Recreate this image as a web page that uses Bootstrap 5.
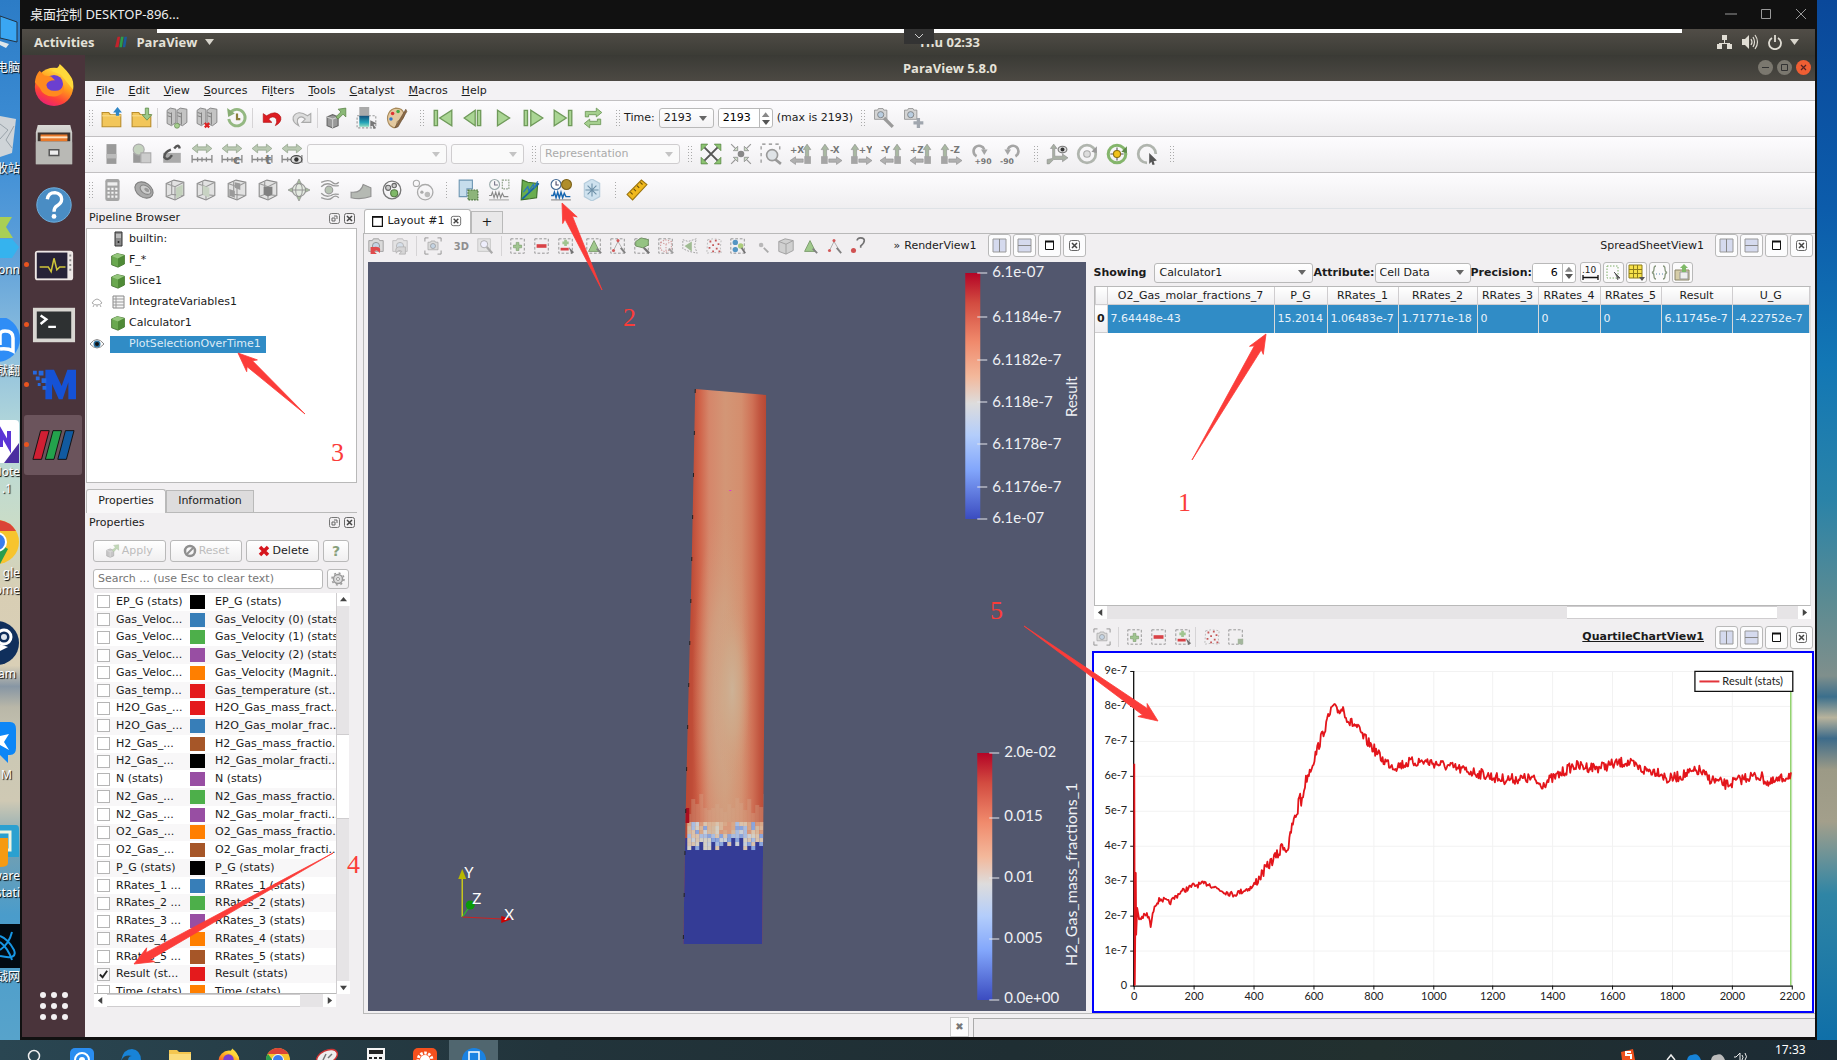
<!DOCTYPE html>
<html lang="en">
<head>
<meta charset="utf-8">
<meta name="viewport" content="width=device-width, initial-scale=1">
<title>ParaView 5.8.0</title>
<link rel="stylesheet" href="https://cdn.jsdelivr.net/npm/bootstrap@5.3.0/dist/css/bootstrap.min.css">
<style>
:root{--edge:#b9b9b9;--panel:#f1eff1}
body{font:11px/16px "DejaVu Sans",sans-serif;color:#1b1b1b;height:100vh;background:#22343b}
.cjk{font-family:"Noto Sans","Noto Sans CJK SC",sans-serif}
button{font:inherit;color:inherit;padding:0;border:0;background:none}
.wall{width:20px;flex:none;overflow:hidden}
.wall-l{background:linear-gradient(#2c7cc6,#3f8fd6 15%,#5d9fd9 24%,#8fc0de 34%,#b6d9d9 42%,#c9dcc8 50%,#d8ceb4 57%,#d9cfb6 64%,#8796a4 66%,#b9b7a8 68%,#cbc8b4 72%,#cfc9b4 77%,#6f9fb4 82%,#4a9ccb 88%,#57a3cb)}
.wall-r{background:linear-gradient(#0a489a,#0c5cab 20%,#1277b5 35%,#2a83a8 48%,#5c8b92 58%,#7f8f8c 65%,#3b6f8c 67%,#b8b39c 69%,#3d6b8a 71%,#9c9a86 74%,#a39f8b 79%,#2f85a5 86%,#0f6fa8)}
.shortcut{height:101px;padding-top:15px;color:#fff;font:12px/17px "Noto Sans","Noto Sans CJK SC",sans-serif;text-shadow:1px 1px 1px #000;white-space:nowrap;display:flex;flex-direction:column;align-items:flex-end}
.shortcut svg{flex:none;width:20px;height:44px}
.win{border:solid #111;border-width:0 2px 3px}
.titlebar{height:29px;background:#111;color:#eee;font-size:13px}
.gpanel{height:26px;background:linear-gradient(#514d47,#3c3c36);color:#e4e1d8;font:700 13px/20px "Open Sans",sans-serif}
.gpanel .pull{left:50%;top:0;width:30px;height:15px;background:#333;margin-left:-15px}
.whiteline{left:135px;right:133px;top:0;height:4px;background:#fff}
.launch{width:63px;background:#4a343b}
.launch .item{height:60px;position:relative}
.launch .item svg{width:44px;height:44px}
.launch .run::before{content:"";position:absolute;left:2px;width:5px;height:5px;border-radius:50%;background:#e9541f}
.launch .cur{background:#6b545c;border-radius:3px;margin:0 3px 0 2px}
.launch .cur::before{left:0}
.apptitle{height:26px;background:linear-gradient(#3a3a35,#4c4943);color:#e6e3da;font:700 13px/20px "Open Sans",sans-serif}
.round{width:15px;height:15px;border-radius:50%;background:#7b786f;display:flex}
.round.end{background:#ef5e33}
.menus{height:19px;background:#f3f2f4;gap:14px;padding:1px 0 0 11px}
.menus a{color:#1b1b1b;text-decoration:none}
.tb{display:flex;align-items:center}
.bar{height:36px;border-top:1px solid #c2c0c2;background:linear-gradient(#fdfcfe,#efeef0);padding-left:2px}
.grip{width:16px;height:19px;flex:none;background:radial-gradient(circle,#aaa 34%,transparent 40%) 7px 0/3px 3px;background-clip:content-box;padding:0 4px 0 7px}
.bar>.tb:first-child>.grip:first-child{width:10px;padding:0 3px 0 2px}
.bar3 .grip{width:14px}
.sepr{width:5px;height:20px;flex:none;border-left:1px solid #d6d4d6}
.ib{width:30px;height:24px;flex:none;display:flex;align-items:center;justify-content:center}
.ib svg{width:22px;height:22px}
.bar3 .ib{width:31px}
.vtb .ib{width:24px}
.vtb .ib svg{width:18px;height:18px;opacity:.8}
.qsel,.qbox{height:20px;border:1px solid var(--edge);border-radius:3px;background-color:#fff;font:11px/16px "DejaVu Sans",sans-serif;color:#1b1b1b;padding:0 4px;min-width:0}
.qsel{appearance:none;background:url("data:image/svg+xml,%3Csvg xmlns='http://www.w3.org/2000/svg' viewBox='0 0 8 5'%3E%3Cpath d='M0 0h8L4 5z' fill='%23666'/%3E%3C/svg%3E") right 6px center/8px 5px no-repeat,linear-gradient(#fff,#f3f2f4)}
.qsel:disabled{color:#aaa;border-color:#cfcdcf;opacity:1;background:url("data:image/svg+xml,%3Csvg xmlns='http://www.w3.org/2000/svg' viewBox='0 0 8 5'%3E%3Cpath d='M0 0h8L4 5z' fill='%23c4c4c4'/%3E%3C/svg%3E") right 6px center/8px 5px no-repeat,#fafafa}
.spin{width:57px;height:20px;border:1px solid var(--edge);border-radius:3px;background:#fff;display:flex;overflow:hidden}
.spin input{border:0;width:100%;min-width:0;padding:0 4px;font:inherit;outline:0;background:#fff}
.spin span{width:13px;flex:none;border-left:1px solid var(--edge);display:flex;flex-direction:column;align-items:center;justify-content:space-evenly}
.spin button{display:block;width:8px;height:5px;background:#888;clip-path:polygon(50% 0,100% 100%,0 100%)}
.spin button+button{transform:rotate(180deg);background:#555}
.dock{width:278px;background:var(--panel)}
.dhead{height:19px;padding:0 6px 0 4px}
.dhead svg{width:15px;height:15px}
.dhead.second{height:20px}
.tree{height:255px;background:#fff;border:1px solid var(--edge);margin:0 6px 0 1px}
.tree .node{height:21px;display:flex;align-items:center}
.tree .eye{width:20px;flex:none;text-align:center;display:flex;justify-content:center}
.tree .kind{width:16px;height:16px;flex:none;margin:0 3px 0 3px}
.tree .sel{background:#308cc6;color:#dcebf6;height:17px;display:flex;margin-left:3px;padding:0 5px 0 19px}
.ptabs{height:24px;border-bottom:1px solid var(--edge);margin:6px 6px 0 1px}
.ptabs button{height:22px;background:#dddcdd;border:1px solid var(--edge);border-bottom:0;width:88px}
.ptabs .on{height:24px;background:#f8f7f8;width:80px;border-radius:3px 3px 0 0;margin-bottom:-1px}
.prow{width:256px;margin:7px 0 0 8px;gap:4px}
.qbtn{height:22px;border:1px solid var(--edge);border-radius:3px;background:linear-gradient(#fff,#f0eff0);display:flex;align-items:center;justify-content:center;gap:2px}
.qbtn:disabled{color:#bdbdbd}
.qbtn svg{width:14px;height:14px}
.third{flex:1 1 40px}
.plist{margin:4px 0 0 9px;width:255px}
.vars{height:401px;overflow:hidden;background:#fff;border-bottom:1px solid var(--edge)}
.vars .rows{height:408px;display:flex;flex-direction:column}
.vrow{flex:1 1 0;min-height:0;display:flex;align-items:center;white-space:nowrap;overflow:hidden}
.vrow:nth-child(even){background:#f8f7f8}
.vrow input{appearance:none;width:13px;height:13px;margin:0 6px 0 3px;border:1px solid #b5b5b5;background:#fff;flex:none}
.vrow input:checked{background:url("data:image/svg+xml,%3Csvg xmlns='http://www.w3.org/2000/svg' viewBox='0 0 12 12'%3E%3Cpath d='M2 6l3 3 5-7' fill='none' stroke='%23222' stroke-width='2'/%3E%3C/svg%3E")}
.vrow label{width:74px;flex:none}
.vrow i{width:15px;height:14px;flex:none;margin-right:10px}
.sbv{width:13px;background:#e6e4e6;border-left:1px solid #cfcdcf;margin-bottom:13px}
.sbv button,.sbh button{background:#fff;width:13px;height:13px;flex:none;display:flex;align-items:center;justify-content:center}
.sbv button svg,.sbh button svg{width:7px;height:7px}
.sbh{height:13px;background:#e6e4e6;display:flex}
.thumb{background:#fff;border:solid #cfcdcf;border-width:1px 0}
.ltabs{height:24px;padding-left:1px}
.ltabs button{border:1px solid var(--edge);border-bottom:0}
.ltabs .on{background:#fff;width:107px;height:24px;border-radius:3px 3px 0 0;gap:4px}
.ltabs .plus{width:32px;height:22px;background:#e9e8e9;font-size:13px}
.frame{border:solid var(--edge);border-width:1px 0 1px 1px;background:var(--panel)}
.half{flex:1 1 0}
.vtb{height:28px;flex:none;padding-bottom:4px}
.vtb .wb{width:23px;height:23px;border:1px solid var(--edge);border-radius:3px;background:#fcfcfd;display:flex;align-items:center;justify-content:center;flex:none}
.vtb .wb svg{width:15px;height:15px}
.wins{display:flex;gap:2px;margin-left:11px;padding-right:2px}
.canvas{background:#52576e;margin:0 4px 2px 4px}
.sheet{background:#fff;border:1px solid var(--edge);border-right-color:#ddd;overflow:hidden;margin-top:2px}
.sheet table{table-layout:fixed;width:100%;border-collapse:collapse}
.sheet th{height:18px;background:linear-gradient(#fff,#efeef0);border:1px solid #cfcdcf;border-top:0;font-weight:400;text-align:center;padding:0;line-height:16px;white-space:nowrap}
.sheet td{height:28px;background:#308cc6;color:#e8f2fa;border-right:1px solid #d9d9d9;padding:0 0 0 3px;white-space:nowrap}
.sheet tbody th{font-weight:700;border-left:0}
.tool{width:21px;height:21px;border:1px solid var(--edge);border-radius:3px;background:#fbfafb;display:flex;align-items:center;justify-content:center;flex:none;margin-right:2px}
.tool svg{width:17px;height:17px}
.plot{background:#fff;border:2px solid #00f;margin:0 1px 0 2px}
.plot svg,.canvas svg{display:block;width:100%;height:100%}
.stat{height:23px;background:var(--panel)}
.stat .cancel{width:19px;height:20px;border:1px solid #c9c9c9;background:#fbfbfb;color:#777;font-size:10px}
.stat .prog{border:1px solid #aaa;border-right:0;border-bottom:0;height:19px;background:#eeecee}
.task{height:20px;background:linear-gradient(90deg,#2a4652,#22343b 30%,#1f2e33 55%,#22302f 75%,#1c2b35);overflow:hidden}
.task .ti{width:49px;height:20px;display:flex;justify-content:center;padding-top:8px;flex:none}
.task .ti svg{width:24px;height:24px;flex:none}
.task .clock{font-size:12px;line-height:20px;width:62px}
.notes{inset:0;width:100%;height:100%;pointer-events:none}
</style>
<script src="https://cdn.jsdelivr.net/npm/bootstrap@5.3.0/dist/js/bootstrap.bundle.min.js"></script>
</head>
<body class="d-flex flex-column overflow-hidden position-relative">

<svg width="0" height="0" class="position-absolute" aria-hidden="true">
<defs>
<linearGradient id="cool" x1="0" y1="0" x2="0" y2="1"><stop offset="0" stop-color="#b40426"/><stop offset=".12" stop-color="#d24b40"/><stop offset=".28" stop-color="#f08a6c"/><stop offset=".42" stop-color="#f3b89b"/><stop offset=".53" stop-color="#dddcdc"/><stop offset=".66" stop-color="#b3cdfb"/><stop offset=".8" stop-color="#82a6fb"/><stop offset="1" stop-color="#3b4cc0"/></linearGradient>
<linearGradient id="teal" x1="0" y1="0" x2="0" y2="1"><stop offset="0" stop-color="#14507c"/><stop offset=".6" stop-color="#23a3b8"/><stop offset="1" stop-color="#8fdcc0"/></linearGradient>
<linearGradient id="fox" x1=".8" y1="0" x2=".3" y2="1"><stop offset="0" stop-color="#fff04a"/><stop offset=".45" stop-color="#ff9a1c"/><stop offset=".75" stop-color="#ff4238"/><stop offset="1" stop-color="#e81e78"/></linearGradient>
<linearGradient id="silver" x1="0" y1="0" x2="0" y2="1"><stop offset="0" stop-color="#d9d9d6"/><stop offset="1" stop-color="#9a9a96"/></linearGradient>
</defs>
<symbol id="folder" viewBox="0 0 20 20"><path d="M1 18V5h6l1.500 2H18v11z" fill="#f2c65a" stroke="#b98d2b"/><path d="M1 8h17" stroke="#fadd8c"/></symbol>
<symbol id="open" viewBox="0 0 20 20"><use href="#folder"/><path d="M15 0l4 5h-2.500v3h-3V5H11z" fill="#2f86c6"/></symbol>
<symbol id="save" viewBox="0 0 20 20"><use href="#folder"/><path d="M13 1h3v6h3l-4.500 5L10 7h3z" fill="#9cc98a" stroke="#5f8a4c" stroke-width=".7"/></symbol>
<symbol id="srv" viewBox="0 0 20 20"><path d="M1 3l3-2 5 1v12l-4 3-4-2zM10 3l3-2 6 1v12l-4 3-5-2z" fill="#c4c4c4" stroke="#808080" stroke-width=".8"/><path d="M5 5v11M14 5v11M1.500 5l3 1M1.500 8l3 1M10.500 5l3 1M10.500 8l3 1" stroke="#777" stroke-width=".8"/></symbol>
<symbol id="srv-on" viewBox="0 0 20 20"><use href="#srv"/><circle cx="10" cy="17" r="2.300" fill="#a7d08f" stroke="#6a8c58" stroke-width=".7"/></symbol>
<symbol id="srv-off" viewBox="0 0 20 20"><use href="#srv"/><path d="M8 14.500l4 4m0-4l-4 4" stroke="#d22" stroke-width="2"/></symbol>
<symbol id="hist" viewBox="0 0 20 20"><path d="M4 5a7.500 7.500 0 1 1-1.500 6" fill="none" stroke="#94b882" stroke-width="2.600"/><path d="M1 1l1 8 6-3z" fill="#88ad74"/><path d="M10 6v5h3" fill="none" stroke="#8b7f3c" stroke-width="2"/></symbol>
<symbol id="undo" viewBox="0 0 20 20"><path d="M2 6v8h8l-3-3q4-4 7 0 1 3-1 6 6-3 5-8-4-7-13-1z" fill="#dc1c22" stroke="#a11" stroke-width=".5"/></symbol>
<symbol id="redo" viewBox="0 0 20 20"><g transform="matrix(-1 0 0 1 20 0)"><path d="M2 6v8h8l-3-3q4-4 7 0 1 3-1 6 6-3 5-8-4-7-13-1z" fill="#ddd" stroke="#aaa"/></g></symbol>
<symbol id="cube" viewBox="0 0 20 20"><path d="M2 5l7-3 9 2v11l-8 4-8-3z" fill="#c9c9c9" stroke="#8a8a8a"/><path d="M2 5l8 3 8-4M10 8v11" fill="none" stroke="#8a8a8a"/></symbol>
<symbol id="gcube" viewBox="0 0 20 20"><path d="M2 5l7-3 9 2v11l-8 4-8-3z" fill="#6aa84f" stroke="#3f6b2c"/><path d="M2 5l7-3 9 2-8 4z" fill="#94c67b"/><path d="M10 8v11l8-4V4z" fill="#4f8a37"/></symbol>
<symbol id="ext" viewBox="0 0 20 20"><path d="M1 9l5-2 5 2v8l-5 2-5-2z" fill="#999" stroke="#666"/><path d="M1 9l5 2 5-2M6 11v8" stroke="#ccc" fill="none"/><path d="M18 1v8l-2.500-2.500L11 11 9 9l4.500-4.500L11 2z" fill="#8ab877" stroke="#5c8448" stroke-width=".7"/></symbol>
<symbol id="cmap" viewBox="0 0 20 20"><path d="M1 8h17v11H1z" fill="none" stroke="#999" stroke-dasharray="2 1.500"/><path d="M3 0h9v9H3z" fill="#aaa"/><path d="M3 8h9v10H3z" fill="url(#teal)"/><path d="M13 12l6 3-3 1 2 3-2 1-1-3-2 1z" fill="#777"/></symbol>
<symbol id="pal" viewBox="0 0 20 20"><path d="M9 1C3 2 0 8 2 14c2 5 7 6 8 3 0-3-1-4 3-5 5-1 5-11-4-11z" fill="#e3c9a0" stroke="#a8895a"/><circle cx="6" cy="6" r="1.600" fill="#d33"/><circle cx="11" cy="4" r="1.600" fill="#4a4"/><circle cx="4.500" cy="11" r="1.600" fill="#37c"/><path d="M18 2L9 17l-1 2 3-1L19 4z" fill="#8c6a46" stroke="#5c4630" stroke-width=".5"/></symbol>
<symbol id="first" viewBox="0 0 20 20"><path d="M2 3h3v14H2zM18 3v14L7 10z" fill="#aad594" stroke="#6f9a5a" stroke-width="1.200"/></symbol>
<symbol id="last" viewBox="0 0 20 20"><path d="M18 3h-3v14h3zM2 3v14l11-7z" fill="#aad594" stroke="#6f9a5a" stroke-width="1.200"/></symbol>
<symbol id="prev" viewBox="0 0 20 20"><path d="M14 3h3v14h-3zM12 3v14L2 10z" fill="#aad594" stroke="#6f9a5a" stroke-width="1.200"/></symbol>
<symbol id="next" viewBox="0 0 20 20"><path d="M2 3h3v14H2zM8 3v14l11-7z" fill="#aad594" stroke="#6f9a5a" stroke-width="1.200"/></symbol>
<symbol id="play" viewBox="0 0 20 20"><path d="M5 3v14l11-7z" fill="#aad594" stroke="#6f9a5a" stroke-width="1.200"/></symbol>
<symbol id="loop" viewBox="0 0 20 20"><path d="M3 9V4h10V1l5 4-5 4V7H6v2zM17 11v5H7v3l-5-4 5-4v2h7v-2z" fill="#a5cf8f" stroke="#6f9a5a" stroke-width=".8"/></symbol>
<symbol id="cam" viewBox="0 0 20 20"><path d="M2 4h4l1-2h6l1 2h4v12H2z" fill="#d5d5d5" stroke="#8a8a8a"/><circle cx="10" cy="10" r="4" fill="#b9cde0" stroke="#777"/></symbol>
<symbol id="cam-key" viewBox="0 0 20 20"><g transform="scale(.7)"><use href="#cam" width="20" height="20"/></g><path d="M10 10l8 8" stroke="#9a9a9a" stroke-width="3"/></symbol>
<symbol id="cam-add" viewBox="0 0 20 20"><g transform="scale(.7)"><use href="#cam" width="20" height="20"/></g><path d="M14 10v9M9.500 14.500h9" stroke="#a0a6ae" stroke-width="3"/></symbol>
<symbol id="cam-undo" viewBox="0 0 20 20"><use href="#cam"/><path d="M4 11v8h7l-3-3q4-3 6 2 3-8-6-7z" fill="#d22"/></symbol>
<symbol id="cam-redo" viewBox="0 0 20 20"><g opacity=".6"><use href="#cam"/><path d="M16 11v8H9l3-3q-4-3-6 2-3-8 6-7z" fill="#bbb" stroke="#777"/></g></symbol>
<symbol id="cam-frame" viewBox="0 0 20 20"><g transform="translate(3 3) scale(.7)"><use href="#cam" width="20" height="20"/></g><path d="M1 5V1h4M15 1h4v4M19 15v4h-4M5 19H1v-4" fill="none" stroke="#777"/></symbol>
<symbol id="cbar" viewBox="0 0 20 20"><path d="M5 1h9v18H5z" fill="#9a9a9a"/><path d="M5 10h9v4H5z" fill="#bbb"/></symbol>
<symbol id="cedit" viewBox="0 0 20 20"><path d="M2 9h7v9H2z" fill="#999"/><circle cx="7" cy="6" r="5" fill="#c4d2be" stroke="#aaa"/><path d="M9 9h9v9H9z" fill="#ccc" stroke="#aaa"/></symbol>
<symbol id="cres" viewBox="0 0 20 20"><path d="M2 9h16v9H2z" fill="#aaa"/><path d="M12 5q4-5 5 0M9 6q-6 2-6 7 3 4 7-2" fill="none" stroke="#555" stroke-width="2.200"/></symbol>
<symbol id="rng" viewBox="0 0 20 20"><path d="M1 5l5-4v2.500h8V1l5 4-5 4V6.500H6V9z" fill="#b9c9b2" stroke="#8b9c83" stroke-width=".6"/><path d="M1 11v7M19 11v7M1 15h18M6 13v4M10 13v4M14 13v4" stroke="#8a8a8a" stroke-width="1.200"/></symbol>
<symbol id="rng-v" viewBox="0 0 20 20"><use href="#rng"/><ellipse cx="14" cy="15" rx="5" ry="3.500" fill="#ddd" stroke="#444"/><circle cx="14" cy="15" r="2" fill="#333"/></symbol>
<symbol id="reset" viewBox="0 0 20 20"><path d="M4 4l12 12M16 4L4 16" stroke="#555" stroke-width="1.800"/><path d="M1 1h6L1 7zM19 1v6l-6-6zM1 19v-6l6 6zM19 19h-6l6-6z" fill="#8cc371" stroke="#4d7a38" stroke-width=".6"/></symbol>
<symbol id="zdata" viewBox="0 0 20 20"><circle cx="10" cy="10" r="3" fill="#888"/><path d="M7 7H3l4-4zM13 7V3l4 4zM7 13v4l-4-4zM13 13h4l-4 4z" fill="#cdddc6" stroke="#888" stroke-width=".7"/><path d="M1 1l4 4M19 1l-4 4M1 19l4-4M19 19l-4-4" stroke="#999"/></symbol>
<symbol id="zbox" viewBox="0 0 20 20"><path d="M1 18V1h17v5" fill="none" stroke="#888" stroke-dasharray="3 3"/><circle cx="11" cy="11" r="5" fill="#dfe3e7" stroke="#9a9a9a" stroke-width="1.500"/><path d="M14 15l5 4" stroke="#999" stroke-width="2.500"/></symbol>
<symbol id="axl" viewBox="0 0 20 20"><path d="M14 13V6h-2l3.500-5L19 6h-2v7z" fill="#a9b8a2" stroke="#888" stroke-width=".5"/><path d="M13 12h6v7h-6z" fill="#a5a5a5"/><path d="M12 14.500H5v-2l-5 3.500 5 3.500v-2h7z" fill="#b0b0b0" stroke="#888" stroke-width=".5"/></symbol>
<symbol id="axr" viewBox="0 0 20 20"><g transform="matrix(-1 0 0 1 20 0)"><use href="#axl"/></g></symbol>
<symbol id="rotp" viewBox="0 0 20 20"><path d="M6 12a5 5 0 1 1 7-6" fill="none" stroke="#a5a5a5" stroke-width="2.400"/><path d="M10 6h6l-3 5z" fill="#a5a5a5"/></symbol>
<symbol id="rotm" viewBox="0 0 20 20"><path d="M14 12a5 5 0 1 0-7-6" fill="none" stroke="#a5a5a5" stroke-width="2.400"/><path d="M4 6h6l-3 5z" fill="#a5a5a5"/></symbol>
<symbol id="blank" viewBox="0 0 20 20"></symbol>
<symbol id="orient" viewBox="0 0 20 20"><path d="M6 14V5H4l3-4 3 4H8v7h7v-2l5 3.500-5 3.500v-2H7l-4 4H1v-4z" fill="#a9b0a5" stroke="#888" stroke-width=".5"/><ellipse cx="15" cy="6" rx="4" ry="3" fill="#ddd" stroke="#777"/><circle cx="15" cy="6" r="1.800" fill="#333"/></symbol>
<symbol id="rc" viewBox="0 0 20 20"><circle cx="10" cy="10" r="8" fill="none" stroke="#b0b5ae" stroke-width="2.500"/><circle cx="10" cy="10" r="3" fill="#ddd" stroke="#aaa"/><path d="M14 8l5 1V3z" fill="#999"/></symbol>
<symbol id="rcg" viewBox="0 0 20 20"><circle cx="10" cy="10" r="8" fill="none" stroke="#84b56b" stroke-width="2.800"/><path d="M10 4v12M4 10h12" stroke="#555"/><circle cx="10" cy="10" r="3.200" fill="#f2c21a" stroke="#8a7010"/><path d="M14 8l5 1V3z" fill="#5d8a48"/></symbol>
<symbol id="rcp" viewBox="0 0 20 20"><path d="M10 18a8 8 0 1 1 8-8" fill="none" stroke="#b0b5ae" stroke-width="2.500"/><path d="M12 9l7 7-3 .5 1 3-2 .5-1-3-2 2z" fill="#555"/></symbol>
<symbol id="calc" viewBox="0 0 20 20"><rect x="3" y="0" width="13" height="20" rx="2" fill="#a5a5a5"/><path d="M5 3h9v3H5z" fill="#eee"/><path d="M5 9h9M5 12.500h9M5 16h9" stroke="#f4f4f4" stroke-width="2" stroke-dasharray="2 1.500"/></symbol>
<symbol id="contour" viewBox="0 0 20 20"><g transform="rotate(35 10 10)"><ellipse cx="10" cy="10" rx="9" ry="6.500" fill="#aaa" stroke="#808080"/><ellipse cx="11" cy="9" rx="5.500" ry="3.500" fill="#ccc" stroke="#888"/><ellipse cx="12" cy="8.500" rx="2.500" ry="1.500" fill="#999"/></g></symbol>
<symbol id="wire" viewBox="0 0 20 20"><path d="M2 4l7-3 9 2v12l-8 4-8-3z" fill="#e2e2e2" stroke="#8a8a8a"/><path d="M2 4l8 3 8-4M10 7v12M7 2v12l-5 2M7 14l11 1" fill="none" stroke="#999"/></symbol>
<symbol id="clip" viewBox="0 0 20 20"><use href="#wire"/><path d="M11 8l6-3v9l-6 4z" fill="#c3d1bc"/></symbol>
<symbol id="slice" viewBox="0 0 20 20"><use href="#wire"/><path d="M7 6l6 2v9l-6-3z" fill="#c8d3c3"/></symbol>
<symbol id="thresh" viewBox="0 0 20 20"><use href="#wire"/><path d="M8 3l5 1v6l-5-2zM3 9l5 2v6l-5-2z" fill="#9a9a9a"/></symbol>
<symbol id="subset" viewBox="0 0 20 20"><use href="#wire"/><path d="M6 7h8v7l-4 2-4-2z" fill="#808080"/></symbol>
<symbol id="glyph" viewBox="0 0 20 20"><circle cx="10" cy="10" r="6" fill="#e3eae0" stroke="#999"/><ellipse cx="10" cy="10" rx="3" ry="6" fill="none" stroke="#999"/><path d="M4 10h12" stroke="#999"/><path d="M10 0l2 4H8zM10 20l2-4H8zM0 10l4-2v4zM20 10l-4-2v4z" fill="#aabfa0" stroke="#888" stroke-width=".6"/></symbol>
<symbol id="stream" viewBox="0 0 20 20"><path d="M2 3q7-3 10 0t6 0M2 17q7 3 10 0t6 0M2 7q4-4 9-2 2 2 7 1M2 13q4 4 9 2 2-2 7-1" fill="none" stroke="#999" stroke-width="1.200"/><circle cx="9" cy="10" r="3.500" fill="#b7c3b3" stroke="#999"/></symbol>
<symbol id="warp" viewBox="0 0 20 20"><path d="M1 12q9 1 11-7l7 3v8q-9 3-18 1z" fill="#b5b9b3" stroke="#909090"/></symbol>
<symbol id="group" viewBox="0 0 20 20"><circle cx="10" cy="10" r="8" fill="none" stroke="#777" stroke-width="1.200"/><circle cx="6.500" cy="8" r="2.300" fill="#ccc" stroke="#666"/><circle cx="12" cy="6" r="2" fill="#ccc" stroke="#666"/><circle cx="12" cy="13" r="3.200" fill="#7fb968" stroke="#567a45"/></symbol>
<symbol id="xlevel" viewBox="0 0 20 20"><circle cx="12" cy="12" r="7" fill="none" stroke="#aaa" stroke-width="1.200"/><circle cx="4" cy="4" r="2.800" fill="none" stroke="#aaa"/><circle cx="14" cy="14" r="2.500" fill="#bbb"/><circle cx="9" cy="12" r="1.500" fill="#aaa"/></symbol>
<symbol id="xsel" viewBox="0 0 20 20"><path d="M2 1h12v8H9v7H2z" fill="#c6ddec" stroke="#6f97b3"/><path d="M10 10h9v9h-9z" fill="#8db47a" stroke="#48703a" stroke-dasharray="1.500 1"/></symbol>
<symbol id="ptime" viewBox="0 0 20 20"><circle cx="6" cy="5" r="4.500" fill="#f6f6f6" stroke="#9aa"/><path d="M6 2v3.500h3" fill="none" stroke="#778"/><path d="M13 1h6v8h-6z" fill="none" stroke="#8a9c82" stroke-dasharray="1.500 1"/><path d="M1 15h2l1-3 1.500 5L7 12l1.500 5 1.500-5 1.500 5 1.500-4 1.500 3h4" fill="none" stroke="#888"/><path d="M1 19h18" stroke="#aaa"/></symbol>
<symbol id="pline" viewBox="0 0 20 20"><path d="M3 1l5 2 9 1-1 13-6 1-8 1z" fill="#69ad4e" stroke="#3d6e2a"/><path d="M3 18L18 4" stroke="#1764a5" stroke-width="1.600"/><path d="M4 12l4-5 1 4 4-6 1 3 3-6" stroke="#2a78ba" stroke-width="1.200" fill="none"/></symbol>
<symbol id="pglob" viewBox="0 0 20 20"><circle cx="5.500" cy="5" r="4.500" fill="#fff" stroke="#446a94"/><path d="M5.500 2v3.500H8" fill="none" stroke="#446"/><circle cx="15" cy="5" r="4.500" fill="#b08e2a" stroke="#7b621a"/><path d="M1 15h2l1-3 1.500 5L7 12l1.500 5 1.500-5 1.500 5 1.500-4 1.500 3h4" fill="none" stroke="#1666b0" stroke-width="1.300"/><path d="M1 19h18" stroke="#888"/></symbol>
<symbol id="probe" viewBox="0 0 20 20"><path d="M3 4l7-4 7 4v12l-7 4-7-4z" fill="#cfe2ef" stroke="#b3cbdb"/><path d="M10 4v12M4 10h12M6 6l8 8M14 6l-8 8" stroke="#6d90a8"/></symbol>
<symbol id="ruler" viewBox="0 0 20 20"><path d="M1 14L14 1l5 4L6 19z" fill="#f0b91d" stroke="#9c7510"/><path d="M4 12l2 2M7 9l2 2M10 6l2 2M13 3l2 2" stroke="#6b500a"/></symbol>
<symbol id="zl" viewBox="0 0 20 20"><path d="M2 2h14v14H2z" fill="#e2e2e2" stroke="#bbb"/><circle cx="9" cy="8" r="4" fill="#eef" stroke="#999"/><path d="M12 11l6 7" stroke="#999" stroke-width="2.500"/></symbol>
<symbol id="dash" viewBox="0 0 20 20"><path d="M2 2h15v16H2z" fill="none" stroke="#777" stroke-dasharray="3 2"/></symbol>
<symbol id="s-add" viewBox="0 0 20 20"><use href="#dash"/><path d="M8 6h3v3h3v3h-3v3H8v-3H5V9h3z" fill="#8dbb79" stroke="#4e7d3b" stroke-width=".6"/></symbol>
<symbol id="s-sub" viewBox="0 0 20 20"><use href="#dash"/><path d="M4 8h11v4H4z" fill="#d4181d"/></symbol>
<symbol id="s-tog" viewBox="0 0 20 20"><use href="#dash"/><path d="M8 3h3v2h2v3h-2v2H8V8H6V5h2z" fill="#8dbb79"/><path d="M4 12h9v3H4z" fill="#d4181d"/><path d="M13 11l6 6-3 2z" fill="#555"/></symbol>
<symbol id="tri" viewBox="0 0 20 20"><path d="M10 4l6 12H4z" fill="#8cc074" stroke="#5a8547"/><path d="M13 13l5 5" stroke="#666" stroke-width="2"/></symbol>
<symbol id="s-tri" viewBox="0 0 20 20"><use href="#dash"/><use href="#tri"/></symbol>
<symbol id="pts" viewBox="0 0 20 20"><path d="M10 5L5 15M10 5l6 10" stroke="#999"/><circle cx="10" cy="4" r="1.700" fill="#c33"/><circle cx="5" cy="15" r="1.700" fill="#c33"/><path d="M13 12l5 6" stroke="#666" stroke-width="2"/></symbol>
<symbol id="s-pts" viewBox="0 0 20 20"><use href="#dash"/><use href="#pts"/></symbol>
<symbol id="s-cube" viewBox="0 0 20 20"><use href="#dash"/><path d="M3 5l6-4 8 2v6l-6 3-8-2z" fill="#7fb968" stroke="#4a7537"/><path d="M12 12l6 6" stroke="#555" stroke-width="2.500"/></symbol>
<symbol id="s-frus" viewBox="0 0 20 20"><use href="#dash"/><path d="M4 6l5-3 7 2v8l-6 4-6-3zM4 6l6 2 6-3M10 8v9" fill="none" stroke="#c88" stroke-dasharray="1.500 1.500" stroke-width="1.200"/><path d="M13 13l5 5" stroke="#888" stroke-width="2"/></symbol>
<symbol id="s-poly" viewBox="0 0 20 20"><path d="M2 3l6 2 9-3-2 8 3 8-9-2-7-3z" fill="none" stroke="#888" stroke-dasharray="2 1.500"/><path d="M4 10l8-5v11z" fill="#8cb07c"/></symbol>
<symbol id="s-scat" viewBox="0 0 20 20"><path d="M3 3l6-1 9 1-1 9 1 6-9-1-7 1z" fill="none" stroke="#aaa" stroke-dasharray="2 2"/><path d="M5 5h2M11 4h2M8 9h2M14 8h2M4 12h2M12 13h2M8 16h2M15 16h2" stroke="#b33" stroke-width="2"/></symbol>
<symbol id="s-blk" viewBox="0 0 20 20"><use href="#dash"/><circle cx="7" cy="6" r="3" fill="#2d7fb8"/><circle cx="7" cy="14" r="3" fill="#2d7fb8"/><circle cx="13" cy="10" r="3" fill="#9cc45f"/><path d="M14 12l4 6" stroke="#555" stroke-width="2"/></symbol>
<symbol id="hov" viewBox="0 0 20 20"><circle cx="9" cy="9" r="2.500" fill="#aaa"/><path d="M12 12l5 5" stroke="#999" stroke-width="2"/></symbol>
<symbol id="ask" viewBox="0 0 20 20"><circle cx="5" cy="15" r="2.800" fill="#c92a2a"/><path d="M9 4q0-3 4-3t4 3-4 6v2" fill="none" stroke="#555" stroke-width="1.800"/></symbol>
<symbol id="s-drag" viewBox="0 0 20 20"><use href="#dash"/><path d="M12 12h6v6h-6z" fill="#91a889"/></symbol>
<symbol id="spv" viewBox="0 0 15 15"><path d="M1 1h13v13H1z" fill="#d5daee" stroke="#999"/><path d="M7.500 1v13" stroke="#888"/></symbol>
<symbol id="sph" viewBox="0 0 15 15"><path d="M1 1h13v13H1z" fill="#d5daee" stroke="#999"/><path d="M1 7.500h13" stroke="#888"/></symbol>
<symbol id="wmax" viewBox="0 0 15 15"><path d="M3.500 3.500h8v8h-8z" fill="#fff" stroke="#111"/><path d="M3 3.500h9" stroke="#111" stroke-width="2"/></symbol>
<symbol id="wx" viewBox="0 0 15 15"><rect x="2.500" y="2.500" width="10" height="10" rx="2" fill="none" stroke="#666"/><path d="M5 5l5 5m0-5l-5 5" stroke="#444" stroke-width="1.500"/></symbol>
<symbol id="wfl" viewBox="0 0 15 15"><rect x="2.500" y="2.500" width="10" height="10" rx="2" fill="none" stroke="#777"/><path d="M5 7h3v3H5zM7 5h3v3" fill="none" stroke="#666"/></symbol>
<symbol id="al" viewBox="0 0 8 8"><path d="M6 0v8L1 4z" fill="#444"/></symbol>
<symbol id="ar" viewBox="0 0 8 8"><path d="M2 0v8l5-4z" fill="#444"/></symbol>
<symbol id="au" viewBox="0 0 8 8"><path d="M0 6h8L4 1z" fill="#444"/></symbol>
<symbol id="ad" viewBox="0 0 8 8"><path d="M0 2h8L4 7z" fill="#444"/></symbol>
</svg>

<div class="d-flex flex-fill overflow-hidden">
  <aside class="wall wall-l" aria-label="Desktop shortcuts">
    <div class="shortcut"><svg viewBox="0 0 20 44"><path d="M0 1l17 6v20L0 23z" fill="#3aa6f2" stroke="#234" stroke-width="1"/><path d="M0 26l9 3-3 4-6-3z" fill="#dde6ea"/></svg><span>电脑</span></div>
    <div class="shortcut"><svg viewBox="0 0 20 44"><path d="M0 0l16 3-4 34-12 4z" fill="#cfd4d8"/><path d="M0 8l8 6-8 9M14 10L6 24l6 8" fill="none" stroke="#9aa3aa"/></svg><span>收站</span></div>
    <div class="shortcut"><svg viewBox="0 0 20 44"><path d="M0 0h12L6 10l7 11H0z" fill="#a9cf55"/><path d="M0 22h12l7 8-7 11H0z" fill="#35b3ee"/></svg><span>onn</span></div>
    <div class="shortcut"><svg viewBox="0 0 20 44"><circle cx="-3" cy="21" r="23" fill="#2f8df6"/><path d="M0 27V17q0-4 5-4 8 0 8 7v13q-5-3-13-2" fill="none" stroke="#fff" stroke-width="3.500"/></svg><span>献翻</span></div>
    <div class="shortcut"><svg viewBox="0 0 20 44"><rect x="-20" y="1" width="39" height="43" rx="4" fill="#fff"/><path d="M1 28V13l8 14V12" fill="none" stroke="#5b35d5" stroke-width="4"/><path d="M19 24v20H4z" fill="#4b2fa0"/></svg><span>Note</span><span class="pe-2">.1</span></div>
    <div class="shortcut"><svg viewBox="0 0 20 44"><circle cx="-3" cy="22" r="22" fill="#f7c42e"/><path d="M-3 0a22 22 0 0 1 19 11H-3z" fill="#db4437"/><path d="M0 44l8-15-8-5z" fill="#2a9d4f"/><circle cx="-3" cy="22" r="10" fill="#fff"/><circle cx="-3" cy="22" r="8" fill="#3b7ded"/></svg><span>gle</span><span>ome</span></div>
    <div class="shortcut"><svg viewBox="0 0 20 44"><circle cx="-3" cy="22" r="22" fill="#102f5c"/><circle cx="4" cy="16" r="7" fill="none" stroke="#fff" stroke-width="3"/><circle cx="4" cy="16" r="3" fill="#dfe6ee"/><path d="M-4 22l12 4-10 5z" fill="#fff"/></svg><span class="pe-1">am</span></div>
    <div class="shortcut"><svg viewBox="0 0 20 44"><path d="M-5 0h15q6 0 6 7v19q0 7-6 7H8v8L0 33z" fill="#0d86f6"/><path d="M0 14l9-2-5 8 5 8-9-5" fill="#fff"/></svg><span class="pe-2">M</span></div>
    <div class="shortcut"><svg viewBox="0 0 20 44"><path d="M0 2h16q3 0 3 4v28H0" fill="#2ba0d0"/><path d="M0 9h10v18H0" fill="none" stroke="#f0f4e0" stroke-width="3"/><path d="M0 15h8v25q0 4-8 4" fill="#f59a12"/></svg><span>ware</span><span>stati</span></div>
    <div class="shortcut"><svg viewBox="0 0 20 44"><path d="M0 0h20v44H0z" fill="#020a12"/><path d="M0 12q8 3 14 14 4 10-14 6M12 8Q9 20 0 26M0 18q8 6 12 18" fill="none" stroke="#1797e6" stroke-width="2"/></svg><span>战网</span></div>
  </aside>

  <main class="win flex-fill d-flex flex-column overflow-hidden">
    <header class="titlebar d-flex align-items-center ps-2 pe-2 cjk">
      <span class="flex-fill">桌面控制 DESKTOP-896...</span>
      <button class="me-4" aria-label="Minimise"><svg width="12" height="12" class="d-block"><path d="M0 6h12" stroke="#999"/></svg></button>
      <button class="me-4" aria-label="Maximise"><svg width="10" height="12" class="d-block"><path d="M.5 1.500h9v9h-9z" fill="none" stroke="#999"/></svg></button>
      <button aria-label="Close"><svg width="12" height="12" class="d-block"><path d="M1 1l10 10M11 1L1 11" stroke="#999"/></svg></button>
    </header>
    <div class="gpanel d-flex align-items-center position-relative ps-2 pe-3">
      <span class="whiteline position-absolute"></span>
      <a href="#" class="text-reset text-decoration-none ms-1 me-3">Activities</a>
      <svg width="14" height="12" class="ms-1 me-1" viewBox="0 0 14 14"><path d="M3 1h3L4 13H0z" fill="#c2232c"/><path d="M7 1h3L8 13H5z" fill="#2c9d4a"/><path d="M11 1h3l-2 12H9z" fill="#1b5a9c"/></svg>
      <a href="#" class="text-reset text-decoration-none ms-1">ParaView</a>
      <svg width="9" height="6" class="ms-2"><path d="M0 0h9L4.500 6z" fill="#d8d5cc"/></svg>
      <span class="flex-fill"></span>
      <svg width="66" height="16" viewBox="0 0 66 16" class="me-1"><path d="M6 1h5v5H6zM1 10h5v5H1zM11 10h5v5h-5zM8 6h1v3h5v1H3V9h5z" fill="#e0ddd4"/><path d="M26 5h3l4-4v14l-4-4h-3z" fill="#e0ddd4"/><path d="M35 5q2 3 0 6M37 3q3 5 0 10M39 1q5 7 0 14" fill="none" stroke="#e0ddd4" stroke-width="1.200"/><path d="M56 4a6 6 0 1 0 6 0M59 1v7" fill="none" stroke="#e0ddd4" stroke-width="1.800"/></svg>
      <svg width="9" height="6" class="ms-1"><path d="M0 0h9L4.500 6z" fill="#d8d5cc"/></svg>
      <span class="position-absolute start-50">Thu 02:33</span>
      <button class="pull position-absolute d-flex align-items-center justify-content-center" aria-label="Show toolbar"><svg width="10" height="6"><path d="M1 1l4 4 4-4" fill="none" stroke="#ccc"/></svg></button>
    </div>

    <div class="d-flex flex-fill overflow-hidden">
      <nav class="launch flex-shrink-0 d-flex flex-column" aria-label="Dock">
        <a href="#" class="item d-flex align-items-center justify-content-center" aria-label="Firefox"><svg viewBox="0 0 46 46"><circle cx="23" cy="25" r="20" fill="url(#fox)"/><path d="M20 8q8-2 9-7 8 7 12 14 3 4 2 13L30 12z" fill="#ffd93b"/><circle cx="23" cy="22" r="9.500" fill="#6b3fd0"/><path d="M3 20Q4 12 8 8l5 5 7 1 4 4q-8 0-9 5 1 6 8 6 7 1 10-6 2 10-9 12-12 1-16-9z" fill="#ff8a1f"/></svg></a>
        <a href="#" class="item d-flex align-items-center justify-content-center" aria-label="Files"><svg viewBox="0 0 46 46"><path d="M6 2h34l2 8v33H4V10z" fill="url(#silver)"/><path d="M6 10h34v9H6z" fill="#3c3430"/><path d="M9 12h28v7H9z" fill="#e8792a"/><path d="M9 14h28v2H9z" fill="#ffe2c0"/><path d="M4 20h38v23H4z" fill="#b9b9b5"/><path d="M18 28h10v6H18z" fill="#eee" stroke="#555" stroke-width="1.500"/></svg></a>
        <a href="#" class="item d-flex align-items-center justify-content-center" aria-label="Help"><svg viewBox="0 0 46 46"><circle cx="23" cy="23" r="18" fill="#4a8dc4" stroke="#6fb0de"/><path d="M16 17q1-7 8-7 7 1 7 7 0 4-5 7-3 2-3 6" fill="none" stroke="#fff" stroke-width="3.500"/><circle cx="23" cy="35" r="2.500" fill="#fff"/></svg></a>
        <a href="#" class="item run d-flex align-items-center justify-content-center" aria-label="System Monitor"><svg viewBox="0 0 46 46"><rect x="3" y="8" width="40" height="31" rx="3" fill="#eee7e6"/><path d="M5 10h32v27H5z" fill="#272238"/><path d="M8 25h9l3 5 3-14 3 12 3-3h6" fill="none" stroke="#cfc43a" stroke-width="1.600"/><path d="M40 12v17" stroke="#888" stroke-width="2" stroke-dasharray="2 3"/></svg></a>
        <a href="#" class="item run d-flex align-items-center justify-content-center" aria-label="Terminal"><svg viewBox="0 0 46 46"><rect x="1" y="5" width="44" height="36" fill="#d9d7d2"/><path d="M5 9h36v28H5z" fill="#2e3132"/><path d="M9 13l6 4-6 5M17 25h8" fill="none" stroke="#fff" stroke-width="2.500"/></svg></a>
        <a href="#" class="item run d-flex align-items-center justify-content-center" aria-label="MFiX"><svg viewBox="0 0 46 46"><path d="M14 38V7h9l8 17 6-17h9v31h-8V20l-6 18h-4l-7-16v16z" fill="#1552d6"/><path d="M1 8h4v4H1zM7 8h5v5H7zM4 14h4v4H4zM10 16h5v5h-5zM6 21h3v3H6zM11 24h4v4h-4z" fill="#2468e0"/></svg></a>
        <a href="#" class="item run cur d-flex align-items-center justify-content-center" aria-label="ParaView"><svg viewBox="0 0 46 46"><g stroke="#111" stroke-width="1"><path d="M10 8h9l-8 30H2z" fill="#d01f33"/><path d="M23 8h9l-8 30h-9z" fill="#23a24c"/><path d="M36 8h9l-8 30H28z" fill="#115aa0"/></g></svg></a>
        <span class="flex-fill"></span>
        <a href="#" class="d-flex justify-content-center pb-3" aria-label="Show applications"><svg width="30" height="30" viewBox="0 0 30 30" fill="#f4f1f2"><circle cx="4" cy="4" r="3"/><circle cx="15" cy="4" r="3"/><circle cx="26" cy="4" r="3"/><circle cx="4" cy="15" r="3"/><circle cx="15" cy="15" r="3"/><circle cx="26" cy="15" r="3"/><circle cx="4" cy="26" r="3"/><circle cx="15" cy="26" r="3"/><circle cx="26" cy="26" r="3"/></svg></a>
      </nav>

      <div class="flex-fill d-flex flex-column overflow-hidden">
        <div class="apptitle d-flex align-items-center justify-content-center position-relative flex-shrink-0">
          <span>ParaView 5.8.0</span>
          <div class="position-absolute end-0 d-flex gap-1 me-1">
            <button class="round" aria-label="Minimise window"><svg viewBox="0 0 15 15"><path d="M4 7.500h7" stroke="#333"/></svg></button>
            <button class="round" aria-label="Maximise window"><svg viewBox="0 0 15 15"><path d="M4.500 4.500h6v6h-6z" fill="none" stroke="#333"/></svg></button>
            <button class="round end" aria-label="Close window"><svg viewBox="0 0 15 15"><path d="M5 5l5 5m0-5l-5 5" stroke="#522" stroke-width="1.200"/></svg></button>
          </div>
        </div>
        <nav class="menus d-flex align-items-center flex-shrink-0">
          <a href="#"><u>F</u>ile</a><a href="#"><u>E</u>dit</a><a href="#"><u>V</u>iew</a><a href="#"><u>S</u>ources</a><a href="#">Fi<u>l</u>ters</a><a href="#"><u>T</u>ools</a><a href="#"><u>C</u>atalyst</a><a href="#"><u>M</u>acros</a><a href="#"><u>H</u>elp</a>
        </nav>
        <div class="bar tb flex-shrink-0">
          <div class="tb" data-icons="= open save | srv-on srv-off hist | undo redo | ext cmap pal = first prev play next last loop ="></div>
          <label for="tsel" class="pe-1">Time:</label>
          <select id="tsel" class="qsel me-1" style="width:55px"><option>2193</option></select>
          <div class="spin me-1" style="width:55px"><input aria-label="Time step" value="2193"><span><button aria-label="Up"></button><button aria-label="Down"></button></span></div>
          <span>(max is 2193)</span>
          <div class="tb" data-icons="= cam-key cam-add"></div>
        </div>
        <div class="bar tb flex-shrink-0">
          <div class="tb" data-icons="= cbar cedit cres rng rng-c rng-t rng-v"></div>
          <select class="qsel me-1" style="width:140px" aria-label="Coloring" disabled><option></option></select>
          <select class="qsel" style="width:73px" aria-label="Component" disabled><option></option></select>
          <div class="tb" data-icons="="></div>
          <select class="qsel" style="width:140px" aria-label="Representation" disabled><option>Representation</option></select>
          <div class="tb" data-icons="= reset zdata zbox px mx py my pz mz rotp rotm = orient rc rcg rcp ="></div>
        </div>
        <div class="bar bar3 tb flex-shrink-0">
          <div class="tb" data-icons="= calc contour clip slice thresh subset glyph stream warp group xlevel = xsel ptime pline pglob probe = ruler"></div>
        </div>

        <div class="d-flex flex-fill overflow-hidden border-top" style="background:#f1eff1">
          <aside class="dock flex-shrink-0 d-flex flex-column overflow-hidden">
            <div class="dhead d-flex align-items-center"><span class="flex-fill">Pipeline Browser</span><svg><use href="#wfl"/></svg><svg><use href="#wx"/></svg></div>
            <div class="tree flex-shrink-0">
              <div class="node"><span class="eye"></span><svg class="kind" viewBox="0 0 16 16"><path d="M5 1h7v14H5z" fill="#8a8a8a" stroke="#333"/><path d="M6 4h5M6 6h5" stroke="#eee"/><circle cx="8.500" cy="11" r="1" fill="#222"/></svg>builtin:</div>
              <div class="node"><span class="eye"></span><svg class="kind"><use href="#gcube"/></svg>F_*</div>
              <div class="node"><span class="eye"></span><svg class="kind"><use href="#gcube"/></svg>Slice1</div>
              <div class="node"><span class="eye"><svg width="12" height="10"><path d="M1 6q5-8 10 0M1 6q5 4 10 0M3 8l-1 2M6 8v2M9 8l1 2" fill="none" stroke="#aaa"/></svg></span><svg class="kind" viewBox="0 0 16 16"><path d="M3 2h11v12H3z" fill="#f5f5f5" stroke="#888"/><path d="M3 5h11M3 8h11M3 11h11M6 2v12" stroke="#999"/></svg>IntegrateVariables1</div>
              <div class="node"><span class="eye"></span><svg class="kind"><use href="#gcube"/></svg>Calculator1</div>
              <div class="node"><span class="eye"><svg width="14" height="10"><path d="M0 5q7-9 14 0-7 8-14 0z" fill="#fff" stroke="#888"/><circle cx="7" cy="5" r="3.500" fill="#2a6f9c"/><circle cx="7" cy="5" r="2" fill="#111"/></svg></span><span class="sel">PlotSelectionOverTime1</span></div>
            </div>
            <div class="ptabs d-flex align-items-end flex-shrink-0"><button class="on">Properties</button><button>Information</button></div>
            <div class="dhead second d-flex align-items-center"><span class="flex-fill">Properties</span><svg><use href="#wfl"/></svg><svg><use href="#wx"/></svg></div>
            <div class="prow d-flex">
              <button class="qbtn third" disabled><svg viewBox="0 0 20 20" opacity=".5"><use href="#ext"/></svg>Apply</button>
              <button class="qbtn third" disabled><svg viewBox="0 0 14 14"><circle cx="7" cy="7" r="5" fill="none" stroke="#8f8f8f" stroke-width="2.500"/><path d="M4 10l6-6" stroke="#8f8f8f" stroke-width="2"/></svg>Reset</button>
              <button class="qbtn third"><svg viewBox="0 0 14 14"><path d="M3 3l8 8m0-8l-8 8" stroke="#d5151c" stroke-width="3.500"/></svg>Delete</button>
              <button class="qbtn fw-bold" style="width:26px;color:#88a07c;font-size:14px" aria-label="Help">?</button>
            </div>
            <div class="prow d-flex">
              <input class="qbox flex-fill" aria-label="Search properties" placeholder="Search ... (use Esc to clear text)">
              <button class="qbtn" style="width:22px;height:20px" aria-label="Advanced"><svg viewBox="0 0 14 14"><circle cx="7" cy="7" r="4.500" fill="#ddd" stroke="#999" stroke-width="1.500"/><circle cx="7" cy="7" r="6" fill="none" stroke="#999" stroke-width="1.500" stroke-dasharray="2 2.700"/><circle cx="7" cy="7" r="1.500" fill="#fff" stroke="#999"/></svg></button>
            </div>
            <div class="plist d-flex">
              <div class="flex-fill overflow-hidden">
                <div class="vars"><div class="rows" id="rows"></div></div>
                <div class="sbh"><button aria-label="Left"><svg><use href="#al"/></svg></button><span class="thumb flex-fill"></span><span style="width:23px"></span><button aria-label="Right"><svg><use href="#ar"/></svg></button></div>
              </div>
              <div class="sbv d-flex flex-column"><button aria-label="Up"><svg><use href="#au"/></svg></button><span style="flex:129"></span><span class="thumb" style="flex:83"></span><span style="flex:163"></span><button aria-label="Down"><svg><use href="#ad"/></svg></button></div>
            </div>
          </aside>

          <section class="flex-fill d-flex flex-column overflow-hidden">
            <div class="ltabs d-flex align-items-end flex-shrink-0">
              <button class="on d-flex align-items-center justify-content-center"><svg width="11" height="11" viewBox="3 3 9 9"><use href="#wmax" width="15" height="15"/></svg>Layout #1<svg width="14" height="14"><use href="#wx"/></svg></button>
              <button class="plus">+</button>
            </div>
            <div class="frame flex-fill d-flex overflow-hidden">
              <div class="half d-flex flex-column overflow-hidden">
                <div class="vtb tb">
                  <div class="tb flex-fill" data-icons="cam-undo cam-redo ~ | cam-frame ~ t3d zl ~ | s-add s-sub s-tog ~ s-tri s-pts s-cube s-frus s-poly s-scat s-blk hov cube tri pts ask"></div>
                  <span class="pe-1">»</span><span>RenderView1</span>
                  <div class="wins pe-1" data-win></div>
                </div>
                <div class="canvas flex-fill overflow-hidden">
                  <svg viewBox="368 262 717 749" font-family="Lato, sans-serif" font-size="15" fill="#eef0f4" id="scene">
                    <defs>
                      <linearGradient id="body"><stop offset="0" stop-color="#b9452f"/><stop offset=".13" stop-color="#bf4c37"/><stop offset=".22" stop-color="#d0644a"/><stop offset=".32" stop-color="#d5866a"/><stop offset=".5" stop-color="#d39676"/><stop offset=".68" stop-color="#d48e6e"/><stop offset=".8" stop-color="#cf7156"/><stop offset=".88" stop-color="#c25640"/><stop offset="1" stop-color="#b0402d"/></linearGradient>
                      <radialGradient id="glow"><stop offset="0" stop-color="#cdb296"/><stop offset=".5" stop-color="#cfa888" stop-opacity=".7"/><stop offset="1" stop-color="#d59877" stop-opacity="0"/></radialGradient>
                      <clipPath id="shape"><path d="M695 389l71 6-1 190-3 359h-79l3-160 5-200z"/></clipPath>
                    </defs>
                    <g clip-path="url(#shape)"><path d="M680 380h90v570h-90z" fill="url(#body)"/><ellipse cx="722" cy="700" rx="30" ry="190" fill="url(#glow)" opacity=".8"/><ellipse cx="732" cy="690" rx="18" ry="90" fill="url(#glow)"/><path d="M680 838h90v110h-90z" fill="#343c96"/><g id="cells"></g></g>
                    <path d="M695 389l-4 195-5 200-3 160" fill="none" stroke="#222" stroke-dasharray="4 38"/>
                    <path d="M729 490h2v1h-2z" fill="#d3d"/>
                    <path d="M965 273h15v246h-15z" fill="url(#cool)"/><path d="M977 753h15v247h-15z" fill="url(#cool)"/>
                    <path d="M977 273h10M977 317h10M977 360h10M977 402h10M977 444h10M977 487h10M977 519h10M989 753h10M989 818h10M989 878h10M989 939h10M989 1000h10" stroke="#e6e8ee"/>
                    <text x="992" y="277">6.1e-07</text><text x="992" y="322">6.1184e-7</text><text x="992" y="365">6.1182e-7</text><text x="992" y="407">6.118e-7</text><text x="992" y="449">6.1178e-7</text><text x="992" y="492">6.1176e-7</text><text x="992" y="523">6.1e-07</text>
                    <text x="1004" y="757">2.0e-02</text><text x="1004" y="821">0.015</text><text x="1004" y="882">0.01</text><text x="1004" y="943">0.005</text><text x="1004" y="1003">0.0e+00</text>
                    <text transform="translate(1077 417) rotate(-90)">Result</text>
                    <text transform="translate(1077 966) rotate(-90)" font-size="16">H2_Gas_mass_fractions_1</text>
                    <path d="M462 917v-40" stroke="#c8c81e" stroke-width="1.500"/><path d="M462 869l4 10h-8z" fill="#b8b800"/>
                    <path d="M462 917l7-10" stroke="#2c2"/><circle cx="470" cy="905" r="4.500" fill="#0a9a0a"/>
                    <path d="M462 917l40 2" stroke="#c22"/><path d="M501 916l11 3-11 4z" fill="#c00"/>
                    <text x="464" y="878" fill="#fff">Y</text><text x="472" y="904" fill="#fff">Z</text><text x="504" y="920" fill="#fff">X</text>
                  </svg>
                </div>
              </div>

              <div class="half d-flex flex-column overflow-hidden">
                <section class="half d-flex flex-column overflow-hidden">
                  <div class="vtb tb justify-content-end"><span>SpreadSheetView1</span><div class="wins" data-win></div></div>
                  <div class="d-flex align-items-center ps-1 flex-shrink-0" style="height:22px">
                    <label for="shw" class="fw-bold me-2">Showing</label><select id="shw" class="qsel" style="width:159px"><option>Calculator1</option></select>
                    <label for="att" class="fw-bold">Attribute:</label><select id="att" class="qsel" style="width:96px"><option>Cell Data</option></select>
                    <label for="prec" class="fw-bold">Precision:</label><div class="spin me-1" style="width:44px"><input id="prec" value="6" class="text-end"><span><button aria-label="Up"></button><button aria-label="Down"></button></span></div>
                    <button class="tool" aria-label="Fixed representation"><svg viewBox="0 0 17 17"><text x="0" y="9" font-size="9" fill="#222">.10</text><path d="M1 11v5M16 11v5M1 13.500h15" stroke="#111" stroke-width="1.300"/></svg></button>
                    <button class="tool" aria-label="Selected only"><svg viewBox="0 0 17 17"><path d="M2 2h11v12H2z" fill="none" stroke="#7fae69" stroke-dasharray="1.500 1.500"/><path d="M9 8l6 6-3 0 1 2" stroke="#555" fill="#666"/></svg></button>
                    <button class="tool" aria-label="Columns"><svg viewBox="0 0 17 17"><path d="M1 1h13v13H1z" fill="#f6e04a" stroke="#8d7d1a"/><path d="M1 5.500h13M1 9.500h13M5.500 1v13M9.500 1v13" stroke="#8d7d1a"/><path d="M11 13h6l-3 4z" fill="#555"/></svg></button>
                    <button class="tool" aria-label="Cell connectivity"><svg viewBox="0 0 17 17"><path d="M5 2Q3 2 3 5t-2 3.500q2 .5 2 3.500t2 3M12 2q2 0 2 3t2 3.500q-2 .5-2 3.500t-2 3" fill="none" stroke="#8a9a80" stroke-width="1.300"/><path d="M5 10h7" stroke="#58a" stroke-dasharray="1 2"/></svg></button>
                    <button class="tool" aria-label="Export"><svg viewBox="0 0 17 17"><path d="M1 6h14v10H1z" fill="#d6cda8" stroke="#8a8468"/><path d="M6 8h8v7H6z" fill="#eee" stroke="#999"/><path d="M10 0l4 4h-2v4H8V4H6z" fill="#7fb968"/></svg></button>
                  </div>
                  <div class="sheet flex-fill ms-1 me-1">
                    <table>
                      <colgroup><col style="width:12px"><col style="width:167px"><col style="width:53px"><col style="width:71px"><col style="width:79px"><col style="width:61px"><col style="width:62px"><col style="width:61px"><col style="width:71px"><col></colgroup>
                      <thead><tr><th></th><th>O2_Gas_molar_fractions_7</th><th>P_G</th><th>RRates_1</th><th>RRates_2</th><th>RRates_3</th><th>RRates_4</th><th>RRates_5</th><th>Result</th><th>U_G</th></tr></thead>
                      <tbody><tr><th>0</th><td>7.64448e-43</td><td>15.2014</td><td>1.06483e-7</td><td>1.71771e-18</td><td>0</td><td>0</td><td>0</td><td>6.11745e-7</td><td>-4.22752e-7</td></tr></tbody>
                    </table>
                  </div>
                  <div class="sbh ms-1 me-1 mb-1"><button aria-label="Left"><svg><use href="#al"/></svg></button><span style="flex:459"></span><span class="thumb" style="flex:210"></span><span style="flex:21"></span><button aria-label="Right"><svg><use href="#ar"/></svg></button></div>
                </section>
                <section class="half d-flex flex-column overflow-hidden">
                  <div class="vtb tb pb-0"><div class="tb flex-fill" data-icons="cam-frame ~ | s-add s-sub s-tog | s-scat s-drag"></div><b class="text-decoration-underline">QuartileChartView1</b><div class="wins" data-win></div></div>
                  <div class="plot flex-fill overflow-hidden">
                    <svg viewBox="1094 653 717 358" font-family="Lato, sans-serif" font-size="11" fill="#222">
                      <g id="gridlines" stroke="#f2f2f2"></g>
                      <path d="M1790.500 671v315" stroke="#8fd06a" stroke-width="1.500"/>
                      <path d="M1132.500 671v315.500H1792" fill="none" stroke="#111" stroke-width="1.300"/>
                      <g id="ticks"></g>
                      <polyline id="curve" fill="none" stroke="#e3151b" stroke-width="1.800" stroke-linejoin="round"/>
                      <path d="M1694.500 671.500h98v20h-98z" fill="#fff" stroke="#111" stroke-width="1.300"/><path d="M1699 681.500h20" stroke="#e3343a" stroke-width="2"/><text x="1722" y="685">Result (stats)</text>
                    </svg>
                  </div>
                </section>
              </div>
            </div>
          </section>
        </div>
        <footer class="stat d-flex align-items-end flex-shrink-0"><span style="flex:866"></span><button class="cancel" aria-label="Abort">✖</button><span class="prog ms-1" style="flex:842"></span></footer>
      </div>
    </div>
  </main>
  <div class="wall wall-r"></div>
</div>

<footer class="task d-flex flex-shrink-0 cjk">
  <span class="ti ms-2"><svg viewBox="0 0 24 24"><circle cx="13" cy="8" r="5.500" fill="none" stroke="#eee" stroke-width="1.500"/></svg></span>
  <span class="ti"><svg viewBox="0 0 24 24"><rect width="24" height="24" rx="5" fill="#2a8df0"/><circle cx="12" cy="12" r="7" fill="none" stroke="#fff" stroke-width="2"/><circle cx="12" cy="12" r="3" fill="#fff"/></svg></span>
  <span class="ti"><svg viewBox="0 0 24 24"><path d="M2 13Q4 1 13 1q9 1 9 12H9q0-5 4-5-8-2-11 5z" fill="#1883d7"/></svg></span>
  <span class="ti"><svg viewBox="0 0 24 24"><path d="M1 2h8l2 2h12v18H1z" fill="#f4c64f"/><path d="M1 6h22v16H1z" fill="#fbdc7c"/></svg></span>
  <span class="ti"><svg viewBox="0 0 46 46"><circle cx="23" cy="25" r="20" fill="url(#fox)"/><circle cx="22" cy="22" r="10" fill="#7a3fd0"/><path d="M20 8q8-2 9-7 12 9 13 20L30 12z" fill="#ffd93b"/></svg></span>
  <span class="ti"><svg viewBox="0 0 24 24"><circle cx="12" cy="12" r="12" fill="#f7c42e"/><path d="M1.600 6a12 12 0 0 1 20.800 0z" fill="#db4437"/><path d="M0 12q0-4 2-6l6 8v9Q0 20 0 12z" fill="#2a9d4f"/><circle cx="12" cy="12" r="5.500" fill="#3b7ded" stroke="#fff"/></svg></span>
  <span class="ti"><svg viewBox="0 0 24 24"><ellipse cx="12" cy="9" rx="11" ry="6.500" transform="rotate(-25 12 9)" fill="#eee" stroke="#c33" stroke-width="1.500"/><path d="M8 12l3-6M13 10l4-4" stroke="#777" stroke-width="1.500"/></svg></span>
  <span class="ti"><svg viewBox="0 0 24 24"><path d="M3 0h18v24H3z" fill="#f4f4f4"/><path d="M5 2h14v4H5zM5 9h3v2H5zM10 9h3v2h-3zM15 9h3v2h-3z" fill="#222"/></svg></span>
  <span class="ti"><svg viewBox="0 0 24 24"><rect width="24" height="24" rx="5" fill="#f4501e"/><circle cx="12" cy="12" r="7" fill="none" stroke="#fff" stroke-width="3" stroke-dasharray="2.500 1.500"/><circle cx="12" cy="12" r="5" fill="#fff"/></svg></span>
  <span class="ti" style="background:#50666f"><svg viewBox="0 0 24 24"><circle cx="12" cy="12" r="12" fill="#1a82e2"/><path d="M7 4h10v16H7z" fill="#1a82e2" stroke="#fff" stroke-width="1.500"/></svg></span>
  <span class="flex-fill"></span>
  <svg width="130" height="20" viewBox="0 0 130 20" class="me-4"><path d="M0 12l12-3 2 11H1z" fill="#f0501c"/><path d="M10 12H5v3h5v4" fill="none" stroke="#fff" stroke-width="2"/><path d="M46 20l4-5 4 5" fill="none" stroke="#eee" stroke-width="1.500"/><path d="M66 20q1-5 5-5 6-3 9 5z" fill="#1683d8"/><path d="M90 20q1-5 5-5 6-3 9 5z" fill="#bbb"/><path d="M113 17h2l4-4v8M121 15q2 2 0 5M124 13q3 4 0 7" fill="none" stroke="#eee"/></svg>
  <span class="clock text-white">17:33</span>
</footer>

<svg class="notes position-absolute" viewBox="0 0 1837 1060" fill="#fb3c39" font-family="Liberation Serif, serif" font-size="26" id="notes">
  <text x="1178" y="511">1</text><text x="623" y="326">2</text><text x="331" y="461">3</text><text x="347" y="873">4</text><text x="990" y="619">5</text>
</svg>

<script>
const $$ = q => document.querySelectorAll(q);
// Icons that carry a caption: [symbol, caption, x, y, size].
const cap = {px:['axl','+X',0,9,8],mx:['axr','-X',9,9,8],py:['axr','+Y',8,9,8],my:['axl','-Y',1,9,8],pz:['axl','+Z',0,9,8],mz:['axr','-Z',9,9,8],
  rotp:['rotp','+90',4,19,7],rotm:['rotm','-90',0,19,7],'rng-c':['rng','c',11,19,11],'rng-t':['rng','t',13,19,11],t3d:['blank','3D',2,14,11]};
const icon = n => {
  if (!cap[n]) return `<svg><use href="#${n}"/></svg>`;
  const [s,txt,x,y,size] = cap[n];
  return `<svg viewBox="0 0 20 20"><use href="#${s}" width="20" height="20"/><text x="${x}" y="${y}" font-size="${size}" font-weight="700" fill="#777">${txt}</text></svg>`;
};
// Toolbars: "=" is a grip, "|" a separator, "~" a small space, the rest are icon names.
$$('[data-icons]').forEach(bar => {
  bar.innerHTML = bar.dataset.icons.split(' ').map(n =>
    n === '=' ? '<span class="grip"></span>' :
    n === '|' ? '<span class="sepr"></span>' :
    n === '~' ? '<span class="ps-1"></span>' :
    `<button class="ib" aria-label="${n}">${icon(n)}</button>`).join('');
});
$$('[data-win]').forEach(g => g.innerHTML = ['spv','sph','wmax','wx'].map(n => `<button class="wb" aria-label="${n}"><svg><use href="#${n}"/></svg></button>`).join(''));

const C = {k:'#000',b:'#377eb8',g:'#4daf4a',p:'#984ea3',o:'#ff7f00',r:'#e41a1c',n:'#a65628'};
const vars = [['EP_G (stats)','k','EP_G (stats)'],['Gas_Veloc...','b','Gas_Velocity (0) (stats)'],['Gas_Veloc...','g','Gas_Velocity (1) (stats)'],['Gas_Veloc...','p','Gas_Velocity (2) (stats)'],['Gas_Veloc...','o','Gas_Velocity (Magnit...'],['Gas_temp...','r','Gas_temperature (st...'],['H2O_Gas_...','r','H2O_Gas_mass_fract...'],['H2O_Gas_...','b','H2O_Gas_molar_frac...'],['H2_Gas_...','n','H2_Gas_mass_fractio...'],['H2_Gas_...','k','H2_Gas_molar_fracti...'],['N (stats)','p','N (stats)'],['N2_Gas_...','g','N2_Gas_mass_fractio...'],['N2_Gas_...','p','N2_Gas_molar_fracti...'],['O2_Gas_...','o','O2_Gas_mass_fractio...'],['O2_Gas_...','n','O2_Gas_molar_fracti...'],['P_G (stats)','k','P_G (stats)'],['RRates_1 ...','b','RRates_1 (stats)'],['RRates_2 ...','g','RRates_2 (stats)'],['RRates_3 ...','p','RRates_3 (stats)'],['RRates_4 ...','o','RRates_4 (stats)'],['RRates_5 ...','n','RRates_5 (stats)'],['Result (st...','r','Result (stats)'],['Time (stats)','o','Time (stats)']];
document.getElementById('rows').innerHTML = vars.map((v,i) =>
  `<div class="vrow"><input type="checkbox" id="v${i}"${i===21?' checked':''}><label for="v${i}">${v[0]}</label><i style="background:${C[v[1]]}"></i><span>${v[2]}</span></div>`).join('');

let seed = 7;
const rnd = () => (seed = (seed * 16807) % 2147483647) / 2147483647;

// Plume front: wisps fade into pale cells above the solid bed.
let cells = '';
const warm = ['#d8a888','#d9b598','#d3b9a0','#d99a7c'], cold = ['#c9cfd6','#a9bde0','#d3cfc4','#d9c3ad','#8aa5dd'];
for (let x = 687; x < 765; x += 4) {
  const up = 8 + rnd()*22, end = 838 + (rnd()*12|0) - (x > 718 && x < 728 ? 2 : 0);
  cells += `<rect x="${x}" y="${(822-up).toFixed(0)}" width="4" height="${up.toFixed(0)}" fill="#d3aa8c" opacity=".35"/>`;
  const chill = rnd() > .55 ? 816 : 834;
  for (let y = 822; y < end; y += 4)
    cells += `<rect x="${x}" y="${y}" width="4" height="4" fill="${y < chill ? warm[rnd()*4|0] : cold[rnd()*5|0]}"/>`;
}
cells += '<path d="M684 808h5v15h-5z" fill="#a80d1f"/>';
document.getElementById('cells').innerHTML = cells;

let t = '', gl = '';
for (let i = 0; i <= 9; i++) {
  const y = 986 - i*35;
  t += `<path d="M1129 ${y}.500h4" stroke="#111"/><text x="1126" y="${y+3}" text-anchor="end">${i ? i+'e-7' : 0}</text>`;
  if (i) gl += `<path d="M1133 ${y}.500h657"/>`;
}
for (let i = 0; i <= 11; i++) {
  const x = Math.round(1133 + i*59.9);
  t += `<path d="M${x} 986v4" stroke="#111"/><text x="${x}" y="1000" text-anchor="middle">${i*200}</text>`;
  if (i) gl += `<path d="M${x} 671v315"/>`;
}
document.getElementById('ticks').innerHTML = t;
document.getElementById('gridlines').innerHTML = gl;

// Key points of the curve in plot units (half pixels across, third pixels down).
const key = [[110,492],[111,1156],[113,820],[114,1005],[116,925],[120,958],[136,945],[140,955],[144,980],[152,915],[165,897],[183,910],[205,878],[232,858],[262,851],[290,872],[315,885],[355,862],[380,812],[400,775],[412,758],[417,728],[423,750],[430,742],[437,680],[449,632],[452,580],[456,612],[466,540],[480,490],[495,425],[510,365],[522,318],[530,335],[543,325],[555,365],[570,378],[585,412],[600,435],[625,480],[650,500],[680,488],[710,484],[740,492],[790,510],[830,522],[870,538],[935,536],[953,555],[985,530],[1020,498],[1070,503],[1130,486],[1165,510],[1200,515],[1215,540],[1250,525],[1282,512],[1300,535],[1338,555],[1385,530],[1410,530],[1427,552],[1450,540],[1474,520]];
const pts = [];
for (let k = 0; k < key.length-1; k++) {
  const [x0,y0] = key[k], [x1,y1] = key[k+1], n = Math.max(1, Math.round((x1-x0)/2));
  for (let j = 0; j < n; j++) {
    const f = j/n, x = x0+(x1-x0)*f, amp = x < 118 ? 0 : x < 360 ? 16 : 32;
    pts.push((1080+x/2.0713).toFixed(1)+','+(600+(y0+(y1-y0)*f+(rnd()-.5)*amp)/3).toFixed(1));
  }
}
document.getElementById('curve').setAttribute('points', pts.join(' '));

// Red pointers: tail point to tip.
const arrow = (x0,y0,x1,y1) => {
  const L = Math.hypot(x1-x0,y1-y0), c = (x1-x0)/L, s = (y1-y0)/L;
  const p = (d,w) => (x1-c*d-s*w).toFixed(1)+' '+(y1-s*d+c*w).toFixed(1);
  return `<path d="M${x0} ${y0}L${p(16,4)} ${p(19,8)} ${x1} ${y1} ${p(19,-8)} ${p(16,-4)}z" stroke="#fb3c39" stroke-width=".8"/>`;
};
document.getElementById('notes').insertAdjacentHTML('beforeend', arrow(1192,460,1266,334)+arrow(602,290,562,203)+arrow(305,414,238,353)+arrow(333,853,134,964)+arrow(1024,626,1158,721));
</script>
</body>
</html>
